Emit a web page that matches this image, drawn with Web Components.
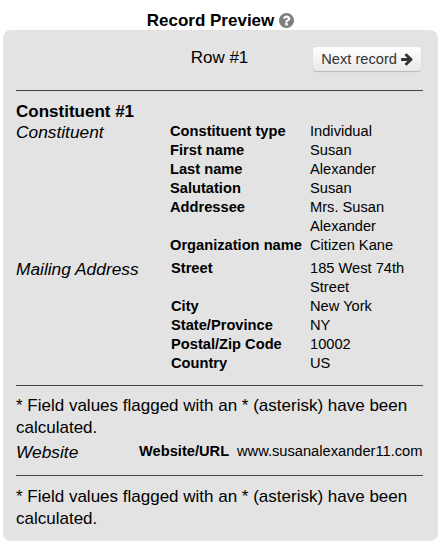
<!DOCTYPE html>
<html lang="en">
<head>
<meta charset="utf-8">
<title>Record Preview</title>
<style>
  html, body { margin: 0; background: #fff; }
  body { font-family: "Liberation Sans", Arial, sans-serif; color: #000; }
</style>
</head>
<body>
<record-preview>
  <record-pager row="Row #1"></record-pager>
  <hr-line></hr-line>
  <h-title>Constituent #1</h-title>
  <field-group legend="Constituent" style="--legend: 154px; --label: 140px;">
    <field-row label="Constituent type">Individual</field-row>
    <field-row label="First name">Susan</field-row>
    <field-row label="Last name">Alexander</field-row>
    <field-row label="Salutation">Susan</field-row>
    <field-row label="Addressee">Mrs. Susan Alexander</field-row>
    <field-row label="Organization name">Citizen Kane</field-row>
  </field-group>
  <field-group legend="Mailing Address" style="--legend: 155px; --label: 139px; --top: 4px;">
    <field-row label="Street">185 West 74th Street</field-row>
    <field-row label="City">New York</field-row>
    <field-row label="State/Province">NY</field-row>
    <field-row label="Postal/Zip Code">10002</field-row>
    <field-row label="Country">US</field-row>
  </field-group>
  <hr-line style="--before: 12px; --after: 9px;"></hr-line>
  <calc-note></calc-note>
  <field-group legend="Website" style="--legend: 123px; --label: 98px; --value: max-content; --top: 3px;">
    <field-row label="Website/URL">www.susanalexander11.com</field-row>
  </field-group>
  <hr-line style="--before: 12px; --after: 10px;"></hr-line>
  <calc-note></calc-note>
</record-preview>

<script>
const previewTemplate = document.createElement('template');
previewTemplate.innerHTML = `
  <style>
    :host {
      display: block;
      width: 442px;
      height: 546px;
      box-sizing: border-box;
      padding: 11px 4px 5px 3px;
      font-family: "Liberation Sans", Arial, sans-serif;
    }
    .title {
      display: flex;
      justify-content: center;
      align-items: center;
      gap: 5px;
      height: 19px;
      font-size: 17px;
      font-weight: bold;
    }
    .title svg { width: 15px; height: 15px; fill: #808080; }
    .panel {
      box-sizing: border-box;
      height: 511px;
      padding: 17px 15px 0 13px;
      background: #e3e3e3;
      border-radius: 8px;
    }
  </style>
  <div class="title">
    <span>Record Preview</span>
    <svg viewBox="128 128 1536 1536" aria-hidden="true"><path d="M1024 1376v-192q0-14-9-23t-23-9h-192q-14 0-23 9t-9 23v192q0 14 9 23t23 9h192q14 0 23-9t9-23zm256-672q0-88-55.500-163t-138.500-116-170-41q-243 0-371 213-15 24 8 42l132 100q7 6 19 6 16 0 25-12 53-68 86-92 34-24 86-24 48 0 85.500 26t37.500 59q0 38-20 61t-68 45q-63 28-115.500 86.500t-52.500 125.500v36q0 14 9 23t23 9h192q14 0 23-9t9-23q0-19 21.500-49.500t54.500-49.500q32-18 49-28.500t46-35 44.500-48 28-60.500 12.500-81zm384 192q0 209-103 385.500t-279.500 279.500-385.500 103-385.500-103-279.500-279.500-103-385.500 103-385.500 279.500-279.500 385.500-103 385.500 103 279.500 279.500 103 385.500z"/></svg>
  </div>
  <div class="panel"><slot></slot></div>
`;

class RecordPreview extends HTMLElement {
  constructor() {
    super();
    this.attachShadow({ mode: 'open' });
    this.shadowRoot.appendChild(previewTemplate.content.cloneNode(true));
  }
}

const pagerTemplate = document.createElement('template');
pagerTemplate.innerHTML = `
  <style>
    :host {
      display: grid;
      grid-template-columns: 1fr auto 1fr;
      align-items: start;
      height: 26px;
    }
    .row {
      grid-column: 2;
      padding-top: 1px;
      font-size: 17px;
      line-height: 20px;
    }
    .next {
      grid-column: 3;
      justify-self: end;
      display: flex;
      align-items: center;
      gap: 3px;
      box-sizing: border-box;
      height: 24px;
      margin: 0 2px 0 0;
      padding: 0 7px 0 8px;
      border: 0;
      border-radius: 4px;
      background: linear-gradient(#fff, #e8e8e8);
      box-shadow: 0 1px 1px rgba(0, 0, 0, .2);
      font: 14.67px "Liberation Sans", Arial, sans-serif;
      color: #333;
    }
    .next svg { width: 14px; height: 14px; fill: #333; }
  </style>
  <div class="row"></div>
  <button class="next" type="button">
    Next record
    <svg viewBox="0 0 1792 1792" aria-hidden="true"><path d="M1600 960q0 54-37 91l-651 651q-39 37-91 37-51 0-90-37l-75-75q-38-38-38-91t38-91l293-293h-704q-52 0-84.500-37.500t-32.500-90.500v-128q0-53 32.500-90.500t84.500-37.500h704l-293-294q-38-36-38-90t38-90l75-75q38-38 90-38 53 0 91 38l651 651q37 35 37 90z"/></svg>
  </button>
`;

class RecordPager extends HTMLElement {
  constructor() {
    super();
    this.attachShadow({ mode: 'open' });
    this.shadowRoot.appendChild(pagerTemplate.content.cloneNode(true));
    this.shadowRoot.querySelector('.row').textContent = this.getAttribute('row');
  }
}

const lineTemplate = document.createElement('template');
lineTemplate.innerHTML = `
  <style>
    :host {
      display: block;
      height: 1px;
      margin-top: var(--before, 17px);
      margin-bottom: var(--after, 11px);
      background: #444;
    }
  </style>
`;

class HrLine extends HTMLElement {
  constructor() {
    super();
    this.attachShadow({ mode: 'open' });
    this.shadowRoot.appendChild(lineTemplate.content.cloneNode(true));
  }
}

const headTemplate = document.createElement('template');
headTemplate.innerHTML = `
  <style>
    :host {
      display: block;
      font-size: 17px;
      font-weight: bold;
      line-height: 20px;
    }
  </style>
  <slot></slot>
`;

class HTitle extends HTMLElement {
  constructor() {
    super();
    this.attachShadow({ mode: 'open' });
    this.shadowRoot.appendChild(headTemplate.content.cloneNode(true));
  }
}

const groupTemplate = document.createElement('template');
groupTemplate.innerHTML = `
  <style>
    :host {
      display: grid;
      grid-template-columns: var(--legend, 154px) 1fr;
      margin-top: var(--top, 0);
    }
    .legend {
      font-size: 17.33px;
      font-style: italic;
      line-height: 21px;
    }
    .rows { min-width: 0; }
  </style>
  <div class="legend"></div>
  <div class="rows"><slot></slot></div>
`;

class FieldGroup extends HTMLElement {
  constructor() {
    super();
    this.attachShadow({ mode: 'open' });
    this.shadowRoot.appendChild(groupTemplate.content.cloneNode(true));
    this.shadowRoot.querySelector('.legend').textContent = this.getAttribute('legend');
  }
}

const rowTemplate = document.createElement('template');
rowTemplate.innerHTML = `
  <style>
    :host {
      display: grid;
      grid-template-columns: var(--label, 140px) var(--value, 1fr);
      font-size: 14.67px;
      line-height: 19px;
    }
    .label { font-weight: bold; }
  </style>
  <div class="label"></div>
  <div class="value"><slot></slot></div>
`;

class FieldRow extends HTMLElement {
  constructor() {
    super();
    this.attachShadow({ mode: 'open' });
    this.shadowRoot.appendChild(rowTemplate.content.cloneNode(true));
    this.shadowRoot.querySelector('.label').textContent = this.getAttribute('label');
  }
}

const noteTemplate = document.createElement('template');
noteTemplate.innerHTML = `
  <style>
    :host {
      display: block;
      font-size: 17px;
      line-height: 22px;
    }
  </style>
  * Field values flagged with an * (asterisk) have been calculated.
`;

class CalcNote extends HTMLElement {
  constructor() {
    super();
    this.attachShadow({ mode: 'open' });
    this.shadowRoot.appendChild(noteTemplate.content.cloneNode(true));
  }
}

customElements.define('record-preview', RecordPreview);
customElements.define('record-pager', RecordPager);
customElements.define('hr-line', HrLine);
customElements.define('h-title', HTitle);
customElements.define('field-group', FieldGroup);
customElements.define('field-row', FieldRow);
customElements.define('calc-note', CalcNote);
</script>
</body>
</html>
